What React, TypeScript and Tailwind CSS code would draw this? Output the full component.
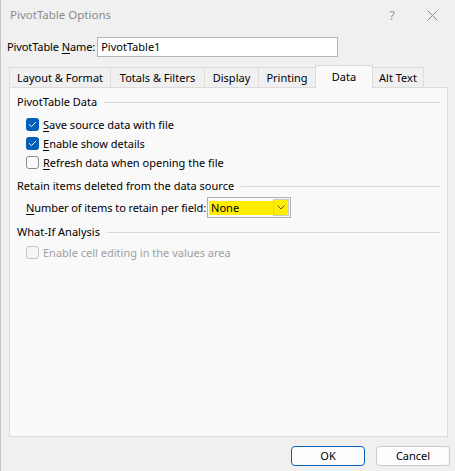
import React from "react";

const FONT = { fontFamily: '"Noto Sans", "Segoe UI", sans-serif' };

type Tab = { label: string; w: number; active?: boolean };

const TABS: Tab[] = [
  { label: "Layout & Format", w: 102 },
  { label: "Totals & Filters", w: 95 },
  { label: "Display", w: 55 },
  { label: "Printing", w: 58 },
  { label: "Data", w: 57, active: true },
  { label: "Alt Text", w: 52 },
];

function Check({ checked, disabled }: { checked?: boolean; disabled?: boolean }) {
  if (checked) {
    return (
      <span className="w-[13px] h-[13px] rounded-[3px] bg-[#005fb8] flex items-center justify-center shrink-0">
        <svg width="9" height="9" viewBox="0 0 9 9" fill="none">
          <path d="M1.5 4.7 L3.5 6.6 L7.6 2.4" stroke="#fff" strokeWidth="1" strokeLinecap="round" strokeLinejoin="round" />
        </svg>
      </span>
    );
  }
  return (
    <span
      className={`w-[13px] h-[13px] rounded-[3px] border shrink-0 ${
        disabled ? "border-[#c6c6c6] bg-[#f5f5f5]" : "border-[#8a8a8a] bg-[#fbfbfb]"
      }`}
    />
  );
}

function U({ children }: { children: React.ReactNode }) {
  return <span className="underline underline-offset-2">{children}</span>;
}

function GroupHeader({ title }: { title: string }) {
  return (
    <div className="flex items-center h-[16px] pl-[7px] pr-[7px]">
      <span className="text-[#000] pr-[7px]">{title}</span>
      <div className="flex-1 h-px bg-[#d9d9d9]" />
    </div>
  );
}

function CheckRow({
  checked,
  disabled,
  children,
}: {
  checked?: boolean;
  disabled?: boolean;
  children: React.ReactNode;
}) {
  return (
    <div className={`flex items-center gap-[4px] pl-[16px] h-[19px] ${disabled ? "text-[#a0a0a0]" : "text-black"}`}>
      <Check checked={checked} disabled={disabled} />
      <span>{children}</span>
    </div>
  );
}

export default function App() {
  return (
    <div
      className="w-[455px] h-[471px] bg-[#f0f0f0] border-l border-[#c4c4c4] flex flex-col text-[11px] leading-[16px] text-black"
      style={FONT}
    >
      {/* title bar */}
      <div className="h-[30px] flex items-center pl-[9px] text-[#8b8b8b]">
        <span className="text-[11.5px]">PivotTable Options</span>
        <span className="ml-auto mr-[32px] text-[13px] text-[#9a9a9a]">?</span>
        <svg width="11" height="11" viewBox="0 0 11 11" className="mr-[17px]">
          <path d="M0.5 0.5 L10.5 10.5 M10.5 0.5 L0.5 10.5" stroke="#8d8d8d" strokeWidth="1" />
        </svg>
      </div>

      {/* name row */}
      <div className="flex items-center mt-[7px] pl-[6px] h-[20px]">
        <span className="tracking-[-0.1px]">
          PivotTable <U>N</U>ame:
        </span>
        <div className="ml-[2px] w-[241px] h-[20px] border border-[#b5b5b5] bg-white flex items-center pl-[3px]">
          PivotTable1
        </div>
      </div>

      {/* tabs */}
      <div className="flex items-end pl-[8px] mt-[8px] h-[22px] relative z-10">
        {TABS.map((t) =>
          t.active ? (
            <div
              key={t.label}
              className="h-[23px] -mb-px bg-[#f9f9f9] border border-b-0 border-[#dcdcdc] flex items-start justify-center pt-[3px] -ml-px"
              style={{ width: t.w + 1 }}
            >
              {t.label}
            </div>
          ) : (
            <div
              key={t.label}
              className="h-[20px] bg-[#f0f0f0] border border-b-0 border-[#dcdcdc] -ml-px first:ml-0 flex items-center justify-center pt-[1px]"
              style={{ width: t.w }}
            >
              {t.label}
            </div>
          )
        )}
      </div>

      {/* panel */}
      <div className="ml-[8px] mr-[7px] h-[350px] bg-[#f9f9f9] border border-[#dcdcdc] pt-[6px]">
        <GroupHeader title="PivotTable Data" />
        <div className="mt-[5px] flex flex-col">
          <CheckRow checked>
            <U>S</U>ave source data with file
          </CheckRow>
          <CheckRow checked>
            <U>E</U>nable show details
          </CheckRow>
          <CheckRow>
            <U>R</U>efresh data when opening the file
          </CheckRow>
        </div>

        <div className="mt-[6px]">
          <GroupHeader title="Retain items deleted from the data source" />
        </div>
        <div className="flex items-center pl-[16px] mt-[3px] h-[21px]">
          <span className="tracking-[-0.08px]">
            <U>N</U>umber of items to retain per field:
          </span>
          <div className="ml-[1px] w-[84px] h-[21px] border border-[#b0b0b0] flex items-center px-[1px]">
            <div className="flex-1 h-[14px] bg-[#ffee00] flex items-center pl-[2px]">None</div>
            <div className="w-[16px] h-[17px] bg-[#ffee00] border border-[#c8c8c8] flex items-center justify-center">
              <svg width="8" height="5" viewBox="0 0 8 5">
                <path d="M0.5 0.5 L4 4 L7.5 0.5" stroke="#555" strokeWidth="1" fill="none" />
              </svg>
            </div>
          </div>
        </div>

        <div className="mt-[6px]">
          <GroupHeader title="What-If Analysis" />
        </div>
        <div className="mt-[3px]">
          <CheckRow disabled>Enable cell editing in the values area</CheckRow>
        </div>
      </div>

      {/* buttons */}
      <div className="flex justify-end gap-[11px] pr-[5px] mt-[9px]">
        <button className="w-[74px] h-[20px] rounded-[4px] border border-[#005fb8] bg-[#fdfdfd] text-[11px] leading-[16px]">
          OK
        </button>
        <button className="w-[74px] h-[20px] rounded-[4px] border border-[#c8c8c8] bg-[#fdfdfd] text-[11px] leading-[16px]">
          Cancel
        </button>
      </div>
    </div>
  );
}
